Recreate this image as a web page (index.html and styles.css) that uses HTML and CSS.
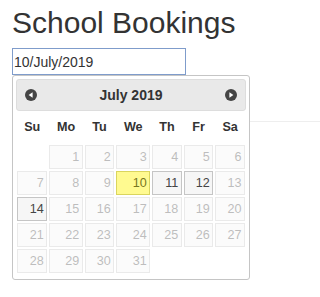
FILE: index.html
```html
<!DOCTYPE html>
<html lang="en">
<head>
<meta charset="utf-8">
<title>School Bookings</title>
<link rel="stylesheet" href="styles.css">
</head>
<body>
<div class="page">
  <h2 class="title">School Bookings</h2>
  <div class="field">
    <input class="date-input" type="text" value="10/July/2019">
    <div class="datepicker">
      <div class="dp-header">
        <span class="dp-prev">
          <svg width="12" height="12" viewBox="0 0 12 12"><circle cx="6" cy="6" r="6" fill="#454545"/><polygon points="3.6,6 7.6,3.2 7.6,8.8" fill="#fff"/></svg>
        </span>
        <span class="dp-next">
          <svg width="12" height="12" viewBox="0 0 12 12"><circle cx="6" cy="6" r="6" fill="#454545"/><polygon points="8.4,6 4.4,3.2 4.4,8.8" fill="#fff"/></svg>
        </span>
        <div class="dp-title">July 2019</div>
      </div>
      <table class="dp-cal">
        <thead>
          <tr><th>Su</th><th>Mo</th><th>Tu</th><th>We</th><th>Th</th><th>Fr</th><th>Sa</th></tr>
        </thead>
        <tbody>
          <tr>
            <td></td>
            <td class="off"><span class="day">1</span></td>
            <td class="off"><span class="day">2</span></td>
            <td class="off"><span class="day">3</span></td>
            <td class="off"><span class="day">4</span></td>
            <td class="off"><span class="day">5</span></td>
            <td class="off"><span class="day">6</span></td>
          </tr>
          <tr>
            <td class="off"><span class="day">7</span></td>
            <td class="off"><span class="day">8</span></td>
            <td class="off"><span class="day">9</span></td>
            <td><a class="day today">10</a></td>
            <td><a class="day">11</a></td>
            <td><a class="day">12</a></td>
            <td class="off"><span class="day">13</span></td>
          </tr>
          <tr>
            <td><a class="day">14</a></td>
            <td class="off"><span class="day">15</span></td>
            <td class="off"><span class="day">16</span></td>
            <td class="off"><span class="day">17</span></td>
            <td class="off"><span class="day">18</span></td>
            <td class="off"><span class="day">19</span></td>
            <td class="off"><span class="day">20</span></td>
          </tr>
          <tr>
            <td class="off"><span class="day">21</span></td>
            <td class="off"><span class="day">22</span></td>
            <td class="off"><span class="day">23</span></td>
            <td class="off"><span class="day">24</span></td>
            <td class="off"><span class="day">25</span></td>
            <td class="off"><span class="day">26</span></td>
            <td class="off"><span class="day">27</span></td>
          </tr>
          <tr>
            <td class="off"><span class="day">28</span></td>
            <td class="off"><span class="day">29</span></td>
            <td class="off"><span class="day">30</span></td>
            <td class="off"><span class="day">31</span></td>
            <td></td>
            <td></td>
            <td></td>
          </tr>
        </tbody>
      </table>
    </div>
  </div>
  <hr class="rule">
</div>
</body>
</html>
```

FILE: styles.css
```css
html, body {
  margin: 0;
  background: #fff;
}

body {
  min-height: 297px;
  overflow: hidden;
  font-family: "Liberation Sans", Arial, Helvetica, sans-serif;
  font-size: 14px;
  line-height: 1.42857;
  color: #333;
}

.page {
  min-height: 291px;
  padding: 6px 0 0 12px;
}

.title {
  margin: 0 0 9px;
  font-size: 30px;
  font-weight: normal;
  line-height: 33px;
  color: #333;
}

.field {
  position: relative;
  width: 174px;
}

.date-input {
  display: block;
  box-sizing: border-box;
  width: 174px;
  height: 27px;
  margin: 0;
  padding: 0 1px;
  border: 1px solid #7f9ccb;
  border-radius: 0;
  background: #fff;
  font-family: "Liberation Sans", Arial, sans-serif;
  font-size: 14px;
  color: #333;
  outline: none;
}

.rule {
  height: 0;
  margin: 46px 0 0;
  border: 0;
  border-top: 1px solid #eee;
}

.datepicker {
  position: absolute;
  top: 100%;
  left: 0;
  z-index: 2;
  box-sizing: border-box;
  width: 238px;
  padding: 3px 3px 0;
  border: 1px solid #c5c5c5;
  border-radius: 3px;
  background: #fff;
  color: #333;
  font-family: "Liberation Sans", Arial, Helvetica, sans-serif;
  font-size: 14px;
}

.dp-header {
  position: relative;
  height: 30px;
  border: 1px solid #ddd;
  border-radius: 3px;
  background: #e9e9e9;
}

.dp-prev,
.dp-next {
  position: absolute;
  top: 50%;
  width: 12px;
  height: 12px;
  margin-top: -6px;
}

.dp-prev svg,
.dp-next svg {
  display: block;
}

.dp-prev {
  left: 8px;
}

.dp-next {
  right: 8px;
}

.dp-title {
  margin: 0 2.3em;
  line-height: 30px;
  text-align: center;
  font-weight: bold;
  color: #333;
}

.dp-cal {
  width: 100%;
  margin: 0 0 5px;
  border-collapse: collapse;
  font-size: 12.6px;
}

.dp-cal th {
  height: 33px;
  padding: 0 .3em;
  line-height: 33px;
  text-align: center;
  font-weight: bold;
  color: #333;
}

.dp-cal td {
  padding: 1px;
  border: 0;
}

.day {
  display: block;
  padding: 0 .2em;
  line-height: 22px;
  text-align: right;
  text-decoration: none;
  border: 1px solid #c5c5c5;
  background: #f6f6f6;
  color: #454545;
}

.today {
  border-color: #dad55e;
  background: #fffa90;
  color: #777620;
}

.off {
  opacity: .35;
}
```
